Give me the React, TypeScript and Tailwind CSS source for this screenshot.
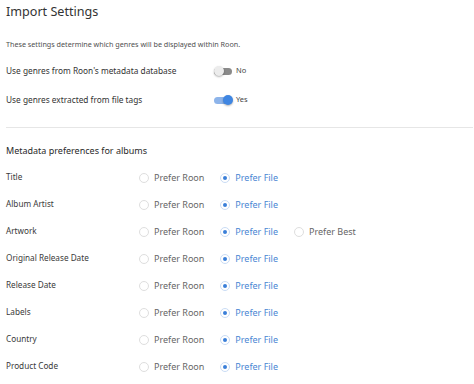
import React from 'react';

const rows: { label: string; best?: boolean }[] = [
  { label: 'Title' },
  { label: 'Album Artist' },
  { label: 'Artwork', best: true },
  { label: 'Original Release Date' },
  { label: 'Release Date' },
  { label: 'Labels' },
  { label: 'Country' },
  { label: 'Product Code' },
];

function Toggle({ on }: { on: boolean }) {
  return (
    <div className="relative w-[19px] h-[10px] flex items-center">
      <div className={`w-[18px] h-[7px] rounded-full ${on ? 'bg-[#8db4ea]' : 'bg-[#8a8a8a]'}`} />
      <div
        className={`absolute top-0 w-[10px] h-[10px] rounded-full shadow-[0_1px_2px_rgba(0,0,0,0.3)] ${
          on ? 'left-[9px] bg-[#3f86e2]' : 'left-0 bg-[#ececec]'
        }`}
      />
    </div>
  );
}

function Radio({ label, checked }: { label: string; checked?: boolean }) {
  return (
    <div className="flex items-center gap-[5px]">
      <div
        className={`w-[10px] h-[10px] rounded-full border flex items-center justify-center ${
          checked ? 'border-[#c9dcf5]' : 'border-[#dedede]'
        }`}
      >
        {checked && <div className="w-[4px] h-[4px] rounded-full bg-[#3a7fd8]" />}
      </div>
      <span className={`text-[9px] ${checked ? 'text-[#4a86d3]' : 'text-[#666]'}`}>{label}</span>
    </div>
  );
}

export default function App() {
  return (
    <div className="w-[474px] h-[384px] bg-white overflow-hidden pl-[6px] pr-[1px] text-[#333]" style={{ fontFamily: '"Noto Sans", "Open Sans", sans-serif' }}>
      <div className="h-[24px] flex items-center text-[12.6px] text-[#333]">Import Settings</div>
      <div className="mt-[12px] h-[16px] flex items-center text-[7.2px] text-[#505050]">
        These settings determine which genres will be displayed within Roon.
      </div>
      <div className="mt-[5px] h-[28px] flex items-center text-[8.3px] text-[#333]">
        <div className="w-[208px]">Use genres from Roon's metadata database</div>
        <Toggle on={false} />
        <span className="ml-[3px] text-[7.5px] text-[#444]">No</span>
      </div>
      <div className="mt-[1px] h-[28px] flex items-center text-[8.3px] text-[#333]">
        <div className="w-[208px]">Use genres extracted from file tags</div>
        <Toggle on />
        <span className="ml-[3px] text-[7.5px] text-[#444]">Yes</span>
      </div>
      <div className="mt-[13px] border-t border-[#e6e6e6]" />
      <div className="mt-[13px] h-[20px] flex items-center text-[9px] text-[#2a2a2a]">Metadata preferences for albums</div>
      <div className="mt-[3px]">
        {rows.map((r) => (
          <div key={r.label} className="h-[27px] flex items-center">
            <div className="w-[133px] text-[8.2px] text-[#3a3a3a]">{r.label}</div>
            <div className="flex items-center gap-[16px]">
              <Radio label="Prefer Roon" />
              <Radio label="Prefer File" checked />
              {r.best && <Radio label="Prefer Best" />}
            </div>
          </div>
        ))}
      </div>
    </div>
  );
}
